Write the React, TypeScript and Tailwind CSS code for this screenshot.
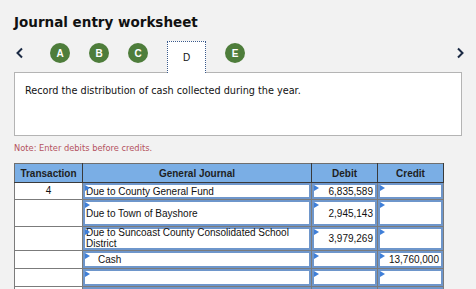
import React from 'react'

type Row = {
  tx: string
  account: React.ReactNode
  indent?: boolean
  top?: boolean
  debit: string
  credit: string
  h: string
}

// h = height of the entry field inside each row
const rows: Row[] = [
  { tx: '4', account: 'Due to County General Fund', debit: '6,835,589', credit: '', h: 'h-[16px]' },
  { tx: '', account: 'Due to Town of Bayshore', debit: '2,945,143', credit: '', h: 'h-[26px]' },
  {
    tx: '',
    account: (
      <>
        Due to Suncoast County Consolidated School
        <br />
        District
      </>
    ),
    top: true,
    debit: '3,979,269',
    credit: '',
    h: 'h-[23px]',
  },
  { tx: '', account: 'Cash', indent: true, debit: '', credit: '13,760,000', h: 'h-[17px]' },
  { tx: '', account: '', debit: '', credit: '', h: 'h-[17px]' },
  { tx: '', account: '', debit: '', credit: '', h: 'h-[17px]' },
]

// little blue flag in the corner of each entry field
function Flag() {
  return (
    <span className="absolute left-0 top-0 h-0 w-0 border-b-[3px] border-l-[5px] border-t-[3px] border-b-transparent border-l-[#3f7fd8] border-t-transparent" />
  )
}

function InputCell({
  children,
  h,
  align = 'left',
  indent = false,
  top = false,
}: {
  children?: React.ReactNode
  h: string
  align?: 'left' | 'right'
  indent?: boolean
  top?: boolean
}) {
  return (
    <td className="border border-[#7b7b7b] p-0 align-top">
      <div
        className={`relative flex border-2 border-[#6e96cb] bg-white leading-[11px] text-[#111] ${h} ${
          top ? 'items-start' : 'items-center'
        } ${align === 'right' ? 'justify-end pr-[2px]' : indent ? 'pl-[13px]' : 'pl-[1px]'}`}
      >
        <Flag />
        <span className={top ? '-mt-[2px]' : ''}>{children}</span>
      </div>
    </td>
  )
}

function Step({ label }: { label: string }) {
  return (
    <div className="mt-[2px] flex h-[20px] w-[20px] items-center justify-center self-start rounded-full bg-[#4e7d3b] text-[10px] font-bold text-white">
      {label}
    </div>
  )
}

export default function App() {
  return (
    <div className="h-[289px] w-[476px] overflow-hidden bg-[#f2f2f2] font-['Liberation_Sans',Arial,sans-serif]">
      <h1 className="pl-[14px] pt-[13px] font-['DejaVu_Sans',Verdana,sans-serif] text-[13.5px] font-bold leading-[18px] text-[#111]">
        Journal entry worksheet
      </h1>

      {/* step tabs */}
      <div className="relative z-10 mt-[10px] flex h-[32px] items-start pl-[15px] pr-[11px]">
        <svg width="9" height="12" viewBox="0 0 9 12" className="mt-[6px]">
          <path d="M7 1.5 L2.5 6 L7 10.5" fill="none" stroke="#1b2a44" strokeWidth="2" />
        </svg>
        <div className="ml-[26px] flex items-start gap-[19px]">
          <Step label="A" />
          <Step label="B" />
          <Step label="C" />
          <div className="flex h-[32px] w-[39px] items-center justify-center border border-dotted border-b-0 border-[#3a5a8c] bg-white text-[10px] text-[#111]">
            D
          </div>
          <Step label="E" />
        </div>
        <svg width="9" height="12" viewBox="0 0 9 12" className="ml-auto mt-[6px]">
          <path d="M2 1.5 L6.5 6 L2 10.5" fill="none" stroke="#1b2a44" strokeWidth="2" />
        </svg>
      </div>

      {/* question box */}
      <div className="mx-[14px] -mt-[1px] h-[64px] w-[448px] border border-[#b4b4b4] bg-white px-[10px] pt-[11px] font-['DejaVu_Sans',Verdana,sans-serif] text-[9.7px] text-[#111]">
        Record the distribution of cash collected during the year.
      </div>

      <p className="ml-[14px] mt-[7px] font-['DejaVu_Sans',Verdana,sans-serif] text-[8.3px] leading-[10px] text-[#b4535f]">
        Note: Enter debits before credits.
      </p>

      <table className="ml-[14px] mt-[10px] w-[430px] table-fixed border-collapse text-[10px]">
        <colgroup>
          <col className="w-[68px]" />
          <col className="w-[229px]" />
          <col className="w-[66px]" />
          <col className="w-[66px]" />
        </colgroup>
        <thead>
          <tr className="h-[19px] bg-[#7aaee5] font-bold text-[#1e1e1e]">
            <th className="border border-[#3a3a3a] border-l-[#6f6f6f] border-t-[#6f6f6f] p-0 font-bold">Transaction</th>
            <th className="border border-[#3a3a3a] border-t-[#6f6f6f] p-0 font-bold">General Journal</th>
            <th className="border border-[#3a3a3a] border-t-[#6f6f6f] p-0 font-bold">Debit</th>
            <th className="border border-[#3a3a3a] border-t-[#6f6f6f] p-0 font-bold">Credit</th>
          </tr>
        </thead>
        <tbody>
          {rows.map((r, i) => (
            <tr key={i}>
              <td className="border border-[#7b7b7b] bg-white p-0 text-center align-top leading-[15px] text-[#111]">{r.tx}</td>
              <InputCell h={r.h} indent={r.indent} top={r.top}>
                {r.account}
              </InputCell>
              <InputCell h={r.h} align="right">
                {r.debit}
              </InputCell>
              <InputCell h={r.h} align="right">
                {r.credit}
              </InputCell>
            </tr>
          ))}
        </tbody>
      </table>
    </div>
  )
}
